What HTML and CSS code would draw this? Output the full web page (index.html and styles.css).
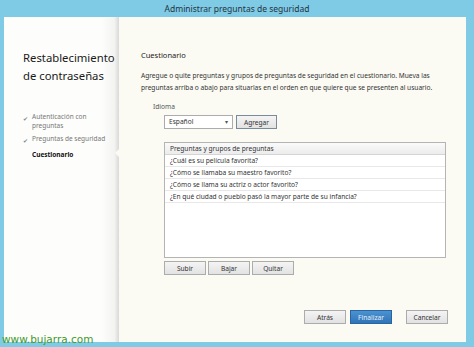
FILE: index.html
```html
<!DOCTYPE html>
<html lang="es">
<head>
  <meta charset="UTF-8">
  <title>Administrar preguntas de seguridad</title>
  <link rel="stylesheet" href="styles.css">
</head>
<body>
  <div class="window">
    <!-- Title bar -->
    <div class="titlebar">Administrar preguntas de seguridad</div>

    <div class="frame">
      <!-- Wizard steps -->
      <aside class="sidebar">
        <h1>Restablecimiento de contraseñas</h1>
        <ul class="steps">
          <li class="done"><span class="check">&#10004;</span><span>Autenticación con<br>preguntas</span></li>
          <li class="done"><span class="check">&#10004;</span><span>Preguntas de seguridad</span></li>
          <li class="current"><span>Cuestionario</span></li>
        </ul>
        <span class="notch"></span>
      </aside>

      <!-- Page content -->
      <section class="main">
        <h2>Cuestionario</h2>
        <p class="desc">Agregue o quite preguntas y grupos de preguntas de seguridad en el cuestionario. Mueva las preguntas arriba o abajo para situarlas en el orden en que quiere que se presenten al usuario.</p>

        <div class="lang">
          <label>Idioma</label>
          <div class="lang-row">
            <div class="select">Español <span class="arrow">&#9662;</span></div>
            <button class="btn add">Agregar</button>
          </div>
        </div>

        <div class="list">
          <div class="list-head">Preguntas y grupos de preguntas</div>
          <div class="row">¿Cuál es su película favorita?</div>
          <div class="row">¿Cómo se llamaba su maestro favorito?</div>
          <div class="row">¿Cómo se llama su actriz o actor favorito?</div>
          <div class="row">¿En qué ciudad o pueblo pasó la mayor parte de su infancia?</div>
        </div>

        <div class="list-buttons">
          <button class="btn">Subir</button>
          <button class="btn">Bajar</button>
          <button class="btn">Quitar</button>
        </div>

        <div class="footer-buttons">
          <button class="btn">Atrás</button>
          <button class="btn primary">Finalizar</button>
          <button class="btn cancel">Cancelar</button>
        </div>
      </section>
    </div>

    <!-- Watermark -->
    <div class="watermark">www.bujarra.com</div>
  </div>
</body>
</html>
```

FILE: styles.css
```css
/* Base */
* { box-sizing: border-box; margin: 0; padding: 0; }
html, body {
  width: 474px;
  height: 347px;
  overflow: hidden;
  background: #7fcbe6;
  font-family: 'Noto Sans', sans-serif;
  color: #333;
}

/* Window */
.window {
  position: relative;
  width: 474px;
  height: 347px;
  display: flex;
  flex-direction: column;
}
.titlebar {
  height: 17px;
  line-height: 17px;
  text-align: center;
  font-size: 8.5px;
  color: #1f3440;
}
.frame {
  height: 325px;
  margin: 0 8px 0 4px;
  display: flex;
  background: #fbfaf3;
}

/* Sidebar */
.sidebar {
  position: relative;
  width: 115px;
  padding: 32px 0 0 19px;
  background: linear-gradient(to right, #fdfdfb 85%, #f3f3f1 96%, #d9d9d9 100%);
}
.sidebar h1 {
  font-size: 11.3px;
  line-height: 18px;
  font-weight: normal;
  color: #1a1a1a;
}
.steps {
  list-style: none;
  margin-top: 27px;
  font-size: 6.5px;
  color: #777;
}
.steps li {
  display: flex;
  gap: 2px;
  line-height: 9px;
  margin-bottom: 4px;
}
.steps .check {
  width: 7px;
  color: #7a8a90;
  font-size: 6px;
  margin-top: 3px;
}
.steps .current {
  color: #111;
  font-weight: bold;
  padding-left: 9px;
  margin-top: 3px;
}
.notch {
  position: absolute;
  right: 0;
  top: 132px;
  width: 0;
  height: 0;
  border-top: 4px solid transparent;
  border-bottom: 4px solid transparent;
  border-right: 4px solid #fbfaf3;
}

/* Main */
.main {
  flex: 1;
  padding: 33px 0 0 22px;
  display: flex;
  flex-direction: column;
  font-size: 6.6px;
  color: #333;
}
.main h2 {
  font-size: 7.5px;
  font-weight: normal;
  line-height: 10px;
  color: #222;
}
.desc {
  margin-top: 10px;
  line-height: 12px;
  width: 300px;
}
.lang {
  margin: 8px 0 0 12px;
}
.lang label {
  display: block;
  line-height: 10px;
  color: #555;
}
.lang-row {
  display: flex;
  gap: 3px;
  margin: 3px 0 0 11px;
}
.select {
  width: 69px;
  height: 14px;
  line-height: 12px;
  padding: 0 4px;
  border: 1px solid #acacac;
  background: #fff;
  display: flex;
  justify-content: space-between;
}
.select .arrow { font-size: 6px; color: #555; }

/* Buttons */
.btn {
  height: 14px;
  width: 42px;
  font-family: inherit;
  font-size: 6.6px;
  color: #333;
  border: 1px solid #acacac;
  background: linear-gradient(#f4f4f4, #e2e2e2);
}
.btn.add {
  width: 41px;
  border-color: #7a8a99;
}
.btn.primary {
  background: linear-gradient(#4b92d2, #2f74b8);
  border-color: #2a65a0;
  color: #e8f2fb;
}

/* Question list */
.list {
  margin: 13px 0 0 23px;
  width: 282px;
  height: 116px;
  border: 1px solid #b4b4b4;
  background: #fff;
}
.list-head {
  height: 12px;
  line-height: 11px;
  padding-left: 5px;
  background: linear-gradient(#fafafa, #ececec);
  border-bottom: 1px solid #d4d4d4;
}
.row {
  height: 12px;
  line-height: 11px;
  padding-left: 5px;
  border-bottom: 1px solid #e8e8e8;
}
.list-buttons {
  display: flex;
  gap: 2px;
  margin: 3px 0 0 23px;
}
.list-buttons .btn { width: 42px; }
.footer-buttons {
  display: flex;
  gap: 4px;
  margin: 35px 0 0 163px;
}
.footer-buttons .cancel { margin-left: 10px; }

/* Watermark */
.watermark {
  position: absolute;
  left: 2px;
  bottom: 2px;
  font-family: 'DejaVu Sans', sans-serif;
  font-size: 10.5px;
  color: #3f9a2b;
}
```
